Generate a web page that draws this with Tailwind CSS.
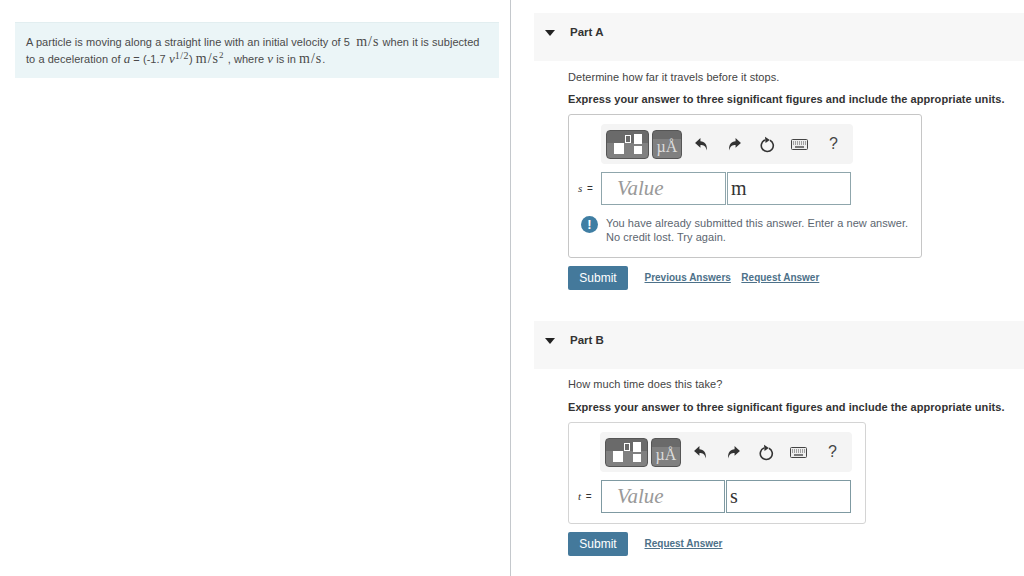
<!DOCTYPE html>
<html lang="en">
<head>
  <meta charset="UTF-8">
  <title>Part A and Part B</title>
  <script src="https://cdn.jsdelivr.net/npm/@tailwindcss/browser@4"></script>
</head>
<body class="bg-white h-[576px] w-[1024px] overflow-hidden font-['Liberation_Sans',Arial,sans-serif] text-[#3a3a3a]">
  <div class="flex h-[576px]">

    <!-- problem statement -->
    <div class="w-[511px] shrink-0 border-r border-[#c4c8cc] pt-[22px] pl-[15px] pr-[11px]">
      <div class="h-[56px] bg-[#ebf5f7] border-t border-[#e2eef0] pl-[11px] pt-[11px] text-[11px] tracking-[0.05px] leading-[16.5px] text-[#4a4a4a]">
        <p class="whitespace-nowrap">A particle is moving along a straight line with an initial velocity of 5 &nbsp;<span class="font-['Liberation_Serif',serif] text-[14px] leading-none tracking-[1px]">m/s</span> when it is subjected</p>
        <p class="whitespace-nowrap">to a deceleration of <i class="font-['Liberation_Serif',serif] text-[13px] leading-none">a</i> = (-1.7 <i class="font-['Liberation_Serif',serif] text-[13px] leading-none">v</i><sup class="font-['Liberation_Serif',serif] text-[10px] leading-none tracking-[0.5px] top-[-4px]">1/2</sup>) <span class="font-['Liberation_Serif',serif] text-[14px] leading-none tracking-[1px]">m/s<sup class="text-[9px] leading-none top-[-5px]">2</sup></span> , where <i class="font-['Liberation_Serif',serif] text-[13px] leading-none">v</i> is in <span class="font-['Liberation_Serif',serif] text-[14px] leading-none tracking-[1px]">m/s</span>.</p>
      </div>
    </div>

    <!-- parts -->
    <div class="flex-1 pl-[23px] pt-[13px]">

      <!-- part A -->
      <div class="h-[48px] bg-[#f7f7f7] flex items-center pl-[11px] pb-[9px]">
        <svg width="10" height="6" viewBox="0 0 10 6" class="mr-[15px]"><path d="M0 0h10L5 6z" fill="#222"/></svg>
        <span class="text-[11.5px] font-bold text-[#333]">Part A</span>
      </div>
      <div class="pl-[34px]">
        <p class="mt-[9px] h-[14px] leading-[14px] text-[11px] tracking-[0.05px] text-[#444]">Determine how far it travels before it stops.</p>
        <p class="mt-[8px] h-[14px] leading-[14px] text-[11px] tracking-[0.06px] font-bold text-[#333] whitespace-nowrap">Express your answer to three significant figures and include the appropriate units.</p>

        <div class="mt-[8px] w-[354px] h-[144px] border border-[#c6c6c6] rounded-[3px] pt-[9px]">
          <div class="ml-[32px] w-[252px] h-[40px] bg-[#f4f4f4] rounded-[4px] flex items-center pl-[5px]">
            <div class="w-[43px] h-[29px] rounded-[4px] border border-[#555] bg-[linear-gradient(#6a6a6a_45%,#808080_45%)] flex justify-center pl-[1px]">
              <div class="w-[10px] h-[11px] bg-white mt-[12px]"></div>
              <div class="ml-[1px] w-[6px] h-[8px] border border-white mt-[4px]"></div>
              <div class="ml-[3px] mt-[3px] flex flex-col gap-[2px]">
                <div class="w-[8px] h-[10px] bg-white"></div>
                <div class="w-[8px] h-[8px] bg-white"></div>
              </div>
            </div>
            <div class="ml-[3px] w-[30px] h-[29px] rounded-[4px] border border-[#555] bg-[linear-gradient(#6a6a6a_30%,#808080_30%)] text-center font-['Liberation_Serif',serif] text-[16px] leading-[31px] text-[#ddd]">µÅ</div>
            <svg width="15" height="15" viewBox="0 0 14 14" class="ml-[12px]"><path d="M6 1 1 5.500 6 10V7.500c3 0 5 1 6 5 .6-5-2-8.500-6-8.500z" fill="#333"/></svg>
            <svg width="15" height="15" viewBox="0 0 14 14" class="ml-[18px]"><path d="M8 1l5 4.500L8 10V7.500c-3 0-5 1-6 5-.6-5 2-8.500 6-8.500z" fill="#333"/></svg>
            <svg width="16" height="17" viewBox="0 0 16 17" class="ml-[18px]"><path d="M10 4.200A6 6 0 1 1 5 4" fill="none" stroke="#333" stroke-width="1.600"/><path d="M5 .8 9.800 4 5.500 7z" fill="#333"/></svg>
            <svg width="17" height="11" viewBox="0 0 17 11" class="ml-[15px]"><rect x=".5" y=".5" width="16" height="10" rx="1" fill="#eee" stroke="#444"/><path d="M2 3h13M2 5h13" stroke="#555" stroke-dasharray="1 1"/><path d="M4 8h9" stroke="#555" stroke-width="1.500"/></svg>
            <span class="ml-[21px] text-[16px] leading-none text-[#444]">?</span>
          </div>
          <div class="mt-[8px] flex items-center">
            <div class="w-[32px] pl-[9px] text-[10px] tracking-[1px] text-[#333]"><i class="font-['Liberation_Serif',serif] text-[11px]">s</i> =</div>
            <div class="w-[125px] h-[33px] border border-[#8fa6ac] pl-[15px] font-['Liberation_Serif',serif] italic text-[21px] leading-[31px] text-[#999]">Value</div>
            <div class="ml-[1px] w-[124px] h-[33px] border border-[#8fa6ac] pl-[3px] font-['Liberation_Serif',serif] text-[20px] leading-[31px] text-[#333]">m</div>
          </div>
          <div class="mt-[11px] flex items-start pl-[12px]">
            <div class="w-[17px] h-[17px] rounded-full bg-[#3f7ea3] text-white text-[13px] font-bold leading-[17px] text-center">!</div>
            <p class="ml-[8px] text-[11px] tracking-[0.05px] leading-[14px] text-[#5c6670] whitespace-nowrap">You have already submitted this answer. Enter a new answer.<br>No credit lost. Try again.</p>
          </div>
        </div>

        <div class="mt-[8px] flex items-center">
          <div class="w-[60px] h-[24px] rounded-[2px] bg-[#44799b] text-white text-[12px] leading-[24px] text-center">Submit</div>
          <a class="ml-[16.500px] mb-[2px] text-[10px] font-bold text-[#4d7189] underline">Previous Answers</a>
          <a class="ml-[10.500px] mb-[2px] text-[10px] font-bold text-[#4d7189] underline">Request Answer</a>
        </div>
      </div>

      <!-- part B -->
      <div class="mt-[31px] h-[48px] bg-[#f7f7f7] flex items-center pl-[11px] pb-[9px]">
        <svg width="10" height="6" viewBox="0 0 10 6" class="mr-[15px]"><path d="M0 0h10L5 6z" fill="#222"/></svg>
        <span class="text-[11.5px] font-bold text-[#333]">Part B</span>
      </div>
      <div class="pl-[34px]">
        <p class="mt-[8px] h-[14px] leading-[14px] text-[11px] tracking-[0.05px] text-[#444]">How much time does this take?</p>
        <p class="mt-[9px] h-[14px] leading-[14px] text-[11px] tracking-[0.06px] font-bold text-[#333] whitespace-nowrap">Express your answer to three significant figures and include the appropriate units.</p>

        <div class="mt-[8px] w-[298px] h-[102px] border border-[#d4d4d4] rounded-[3px] pt-[9px]">
          <div class="ml-[31px] w-[252px] h-[40px] bg-[#f4f4f4] rounded-[4px] flex items-center pl-[5px]">
            <div class="w-[43px] h-[29px] rounded-[4px] border border-[#555] bg-[linear-gradient(#6a6a6a_45%,#808080_45%)] flex justify-center pl-[1px]">
              <div class="w-[10px] h-[11px] bg-white mt-[12px]"></div>
              <div class="ml-[1px] w-[6px] h-[8px] border border-white mt-[4px]"></div>
              <div class="ml-[3px] mt-[3px] flex flex-col gap-[2px]">
                <div class="w-[8px] h-[10px] bg-white"></div>
                <div class="w-[8px] h-[8px] bg-white"></div>
              </div>
            </div>
            <div class="ml-[3px] w-[30px] h-[29px] rounded-[4px] border border-[#555] bg-[linear-gradient(#6a6a6a_30%,#808080_30%)] text-center font-['Liberation_Serif',serif] text-[16px] leading-[31px] text-[#ddd]">µÅ</div>
            <svg width="15" height="15" viewBox="0 0 14 14" class="ml-[12px]"><path d="M6 1 1 5.500 6 10V7.500c3 0 5 1 6 5 .6-5-2-8.500-6-8.500z" fill="#333"/></svg>
            <svg width="15" height="15" viewBox="0 0 14 14" class="ml-[18px]"><path d="M8 1l5 4.500L8 10V7.500c-3 0-5 1-6 5-.6-5 2-8.500 6-8.500z" fill="#333"/></svg>
            <svg width="16" height="17" viewBox="0 0 16 17" class="ml-[18px]"><path d="M10 4.200A6 6 0 1 1 5 4" fill="none" stroke="#333" stroke-width="1.600"/><path d="M5 .8 9.800 4 5.500 7z" fill="#333"/></svg>
            <svg width="17" height="11" viewBox="0 0 17 11" class="ml-[15px]"><rect x=".5" y=".5" width="16" height="10" rx="1" fill="#eee" stroke="#444"/><path d="M2 3h13M2 5h13" stroke="#555" stroke-dasharray="1 1"/><path d="M4 8h9" stroke="#555" stroke-width="1.500"/></svg>
            <span class="ml-[21px] text-[16px] leading-none text-[#444]">?</span>
          </div>
          <div class="mt-[8px] flex items-center">
            <div class="w-[32px] pl-[9px] text-[10px] tracking-[1px] text-[#333]"><i class="font-['Liberation_Serif',serif] text-[11px]">t</i> =</div>
            <div class="w-[124px] h-[33px] border border-[#7f9aa2] pl-[15px] font-['Liberation_Serif',serif] italic text-[21px] leading-[31px] text-[#999]">Value</div>
            <div class="ml-[1px] w-[125px] h-[33px] border border-[#7f9aa2] pl-[3px] font-['Liberation_Serif',serif] text-[20px] leading-[31px] text-[#333]">s</div>
          </div>
        </div>

        <div class="mt-[8px] flex items-center">
          <div class="w-[60px] h-[24px] rounded-[2px] bg-[#44799b] text-white text-[12px] leading-[24px] text-center">Submit</div>
          <a class="ml-[16.500px] mb-[2px] text-[10px] font-bold text-[#4d7189] underline">Request Answer</a>
        </div>
      </div>
    </div>
  </div>
</body>
</html>
